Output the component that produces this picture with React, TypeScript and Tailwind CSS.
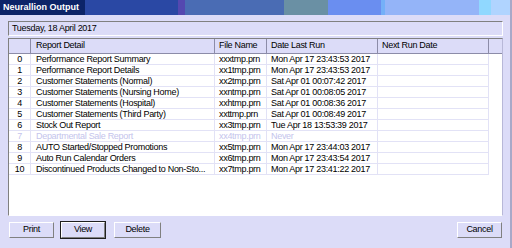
import React from 'react';

interface ReportRow {
  id: number;
  detail: string;
  file: string;
  lastRun: string;
  nextRun: string;
  disabled?: boolean;
}

const rows: ReportRow[] = [
  { id: 0, detail: 'Performance Report Summary', file: 'xxxtmp.prn', lastRun: 'Mon Apr 17 23:43:53 2017', nextRun: '' },
  { id: 1, detail: 'Performance Report Details', file: 'xx1tmp.prn', lastRun: 'Mon Apr 17 23:43:53 2017', nextRun: '' },
  { id: 2, detail: 'Customer Statements (Normal)', file: 'xx2tmp.prn', lastRun: 'Sat Apr 01 00:07:42 2017', nextRun: '' },
  { id: 3, detail: 'Customer Statements (Nursing Home)', file: 'xxntmp.prn', lastRun: 'Sat Apr 01 00:08:05 2017', nextRun: '' },
  { id: 4, detail: 'Customer Statements (Hospital)', file: 'xxhtmp.prn', lastRun: 'Sat Apr 01 00:08:36 2017', nextRun: '' },
  { id: 5, detail: 'Customer Statements (Third Party)', file: 'xxttmp.prn', lastRun: 'Sat Apr 01 00:08:49 2017', nextRun: '' },
  { id: 6, detail: 'Stock Out Report', file: 'xx3tmp.prn', lastRun: 'Tue Apr 18 13:53:39 2017', nextRun: '' },
  { id: 7, detail: 'Departmental Sale Report', file: 'xx4tmp.prn', lastRun: 'Never', nextRun: '', disabled: true },
  { id: 8, detail: 'AUTO Started/Stopped Promotions', file: 'xx5tmp.prn', lastRun: 'Mon Apr 17 23:44:03 2017', nextRun: '' },
  { id: 9, detail: 'Auto Run Calendar Orders', file: 'xx6tmp.prn', lastRun: 'Mon Apr 17 23:43:54 2017', nextRun: '' },
  { id: 10, detail: 'Discontinued Products Changed to Non-Sto...', file: 'xx7tmp.prn', lastRun: 'Mon Apr 17 23:41:22 2017', nextRun: '' },
];

const Button: React.FC<{ label: string; width: string; isDefault?: boolean }> = ({ label, width, isDefault }) => (
  <div
    className={`${width} h-[16px] flex items-center justify-center bg-[#dcdcf8] border border-t-white border-l-white border-r-[#808080] border-b-[#808080] ${
      isDefault ? 'outline outline-1 outline-[#202020]' : ''
    }`}
  >
    {label}
  </div>
);

const App: React.FC = () => {
  return (
    <div className="w-[512px] h-[248px] bg-[#dcdcf8] font-['Liberation_Sans',sans-serif] text-[9px] tracking-[-0.3px] text-black flex flex-col border-r-2 border-r-[#a8a8c8] overflow-hidden">
      {/* Title bar */}
      <div className="h-[15px] flex items-center px-[3px] text-white font-bold tracking-normal bg-[linear-gradient(90deg,#0c2468_0px,#0c2468_85px,#2a48a4_85px,#2a48a4_178px,#5448b0_178px,#5448b0_185px,#4a6cb4_185px,#4a6cb4_284px,#6a90a4_284px,#6a90a4_328px,#6a8ef0_328px,#6a8ef0_381px,#74b0f8_381px,#74b0f8_385px,#94b4f8_385px,#94b4f8_479px,#90d8ff_479px,#90d8ff_491px,#b0d4ff_491px)]">
        Neurallion Output
      </div>

      <div className="flex flex-col pl-[8px] pr-[7px] pt-[6px]">
        {/* Date */}
        <div className="h-[15px] flex items-center px-[3px] border border-t-[#808080] border-l-[#808080] border-r-white border-b-white">
          Tuesday, 18 April 2017
        </div>

        {/* Report list */}
        <div className="mt-[2px] h-[178px] bg-white border border-t-[#808080] border-l-[#808080] border-r-[#b8b8d8] border-b-white">
          <div className="grid grid-cols-[22px_184px_52px_111px_111px_1fr]">
            <div className="h-[15px] bg-[#dcdcf8] border-r border-b border-[#8c8ca8]" />
            <div className="h-[15px] bg-[#dcdcf8] border-r border-b border-[#8c8ca8] px-[5px] flex items-center">Report Detail</div>
            <div className="h-[15px] bg-[#dcdcf8] border-r border-b border-[#8c8ca8] px-[4px] flex items-center">File Name</div>
            <div className="h-[15px] bg-[#dcdcf8] border-r border-b border-[#8c8ca8] px-[4px] flex items-center">Date Last Run</div>
            <div className="h-[15px] bg-[#dcdcf8] border-r border-b border-[#8c8ca8] px-[4px] flex items-center">Next Run Date</div>
            <div className="h-[15px] bg-[#dcdcf8] border-b border-[#8c8ca8]" />

            {rows.map((row) => {
              const cell = `h-[11px] leading-[10px] border-r border-b border-[#e2e2f6] whitespace-nowrap overflow-hidden ${
                row.disabled ? 'text-[#c4c4ec]' : ''
              }`;
              return (
                <React.Fragment key={row.id}>
                  <div className={`${cell} text-center`}>{row.id}</div>
                  <div className={`${cell} px-[5px]`}>{row.detail}</div>
                  <div className={`${cell} px-[4px]`}>{row.file}</div>
                  <div className={`${cell} px-[4px]`}>{row.lastRun}</div>
                  <div className={`${cell} px-[4px]`}>{row.nextRun}</div>
                  <div className="h-[11px]" />
                </React.Fragment>
              );
            })}
          </div>
        </div>

        {/* Buttons */}
        <div className="mt-[6px] flex items-center pl-[1px]">
          <Button label="Print" width="w-[45px]" />
          <div className="ml-[7px]">
            <Button label="View" width="w-[44px]" isDefault />
          </div>
          <div className="ml-[9px]">
            <Button label="Delete" width="w-[47px]" />
          </div>
          <div className="ml-auto mr-[1px]">
            <Button label="Cancel" width="w-[45px]" />
          </div>
        </div>
      </div>
    </div>
  );
};

export default App;
